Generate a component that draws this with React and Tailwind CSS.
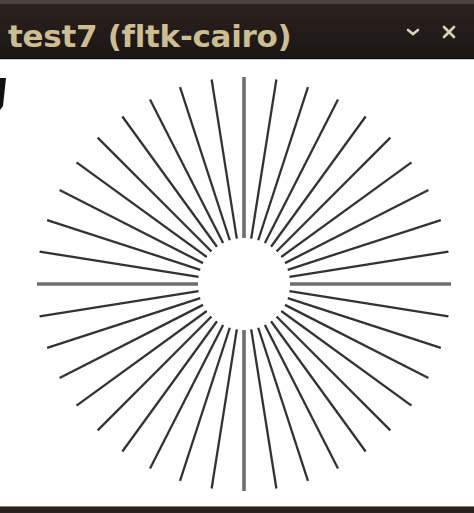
import React from "react";

const CX = 244;
const CY = 224;
const R_IN = 46;
const R_OUT = 207;

const spokes = Array.from({ length: 40 }, (_, i) => {
  const a = (i * 9 * Math.PI) / 180;
  const c = Math.cos(a);
  const s = Math.sin(a);
  return {
    key: i,
    axis: i % 10 === 0,
    x1: CX + R_IN * c,
    y1: CY + R_IN * s,
    x2: CX + R_OUT * c,
    y2: CY + R_OUT * s,
  };
});

const App = () => {
  return (
    <div className="w-[474px] h-[513px] flex flex-col bg-white overflow-hidden">
      {/* title bar */}
      <div className="h-[59px] shrink-0 flex flex-col bg-gradient-to-b from-[#2e2220] to-[#1a1614]">
        <div className="h-[4px] bg-[#4a4440]" />
        <div className="flex-1 flex items-center justify-between pl-[8px] pr-[18px] pt-[10px]">
          <span
            className="text-[#cdbd92] font-bold text-[31px] leading-none tracking-[-0.3px]"
            style={{ fontFamily: '"DejaVu Sans", "Liberation Sans", sans-serif' }}
          >
            test7 (fltk-cairo)
          </span>
          <div className="flex items-center gap-[22px] text-[#d8d2b6] pb-[8px]">
            <svg width="14" height="10" viewBox="0 0 14 10">
              <path d="M2 3 L7 7 L12 3" fill="none" stroke="currentColor" strokeWidth="2.6" strokeLinecap="round" />
            </svg>
            <svg width="14" height="14" viewBox="0 0 14 14">
              <path d="M2 2 L12 12 M12 2 L2 12" fill="none" stroke="currentColor" strokeWidth="2.6" strokeLinecap="round" />
            </svg>
          </div>
        </div>
        <div className="h-[1px] bg-[#0c0a09]" />
      </div>

      {/* canvas */}
      <div className="flex-1 relative bg-white border-t border-[#d0d0d0]">
        <svg width="474" height="446" viewBox="0 0 474 446" className="block">
          <polygon points="0,18 6,18 3,46 0,50" fill="#111" />
          {spokes.map((l) => (
            <line
              key={l.key}
              x1={l.x1}
              y1={l.y1}
              x2={l.x2}
              y2={l.y2}
              stroke={l.axis ? "#6e6e6e" : "#333333"}
              strokeWidth={l.axis ? 3.6 : 2.3}
            />
          ))}
        </svg>
      </div>

      {/* bottom frame */}
      <div className="h-[8px] shrink-0 bg-[#2a2220] border-t border-[#8a8580]" />
    </div>
  );
};

export default App;
